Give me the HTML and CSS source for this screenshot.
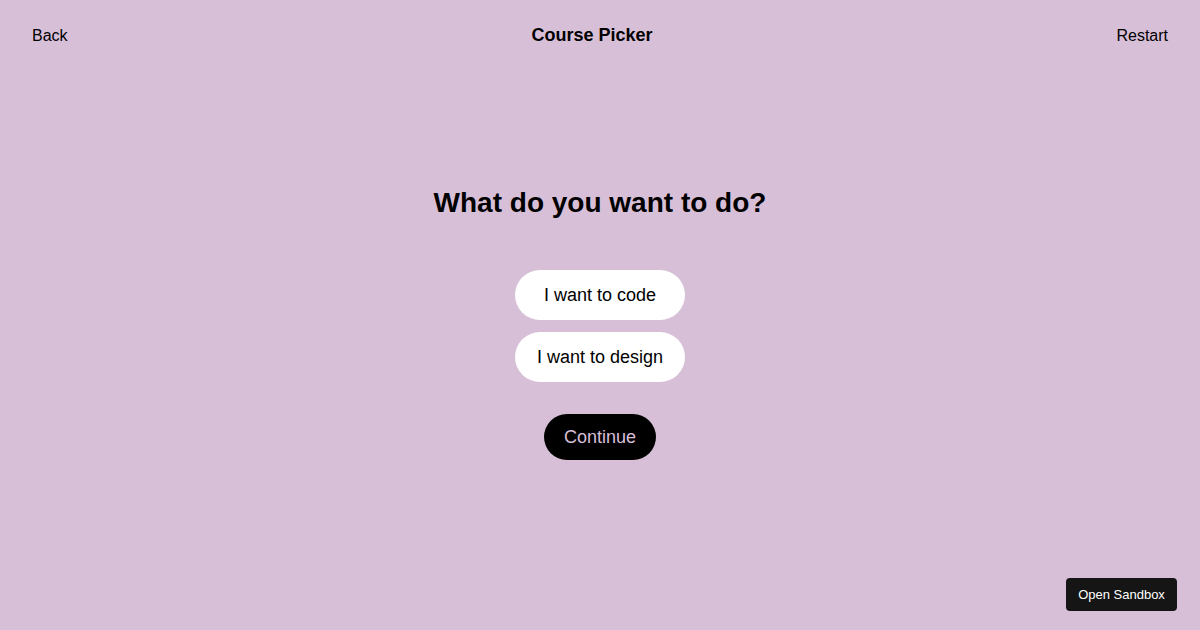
FILE: index.html
```html
<!DOCTYPE html>
<html lang="en">

<head>
    <meta charset="UTF-8">
    <meta name="viewport" content="width=device-width, initial-scale=1.0">
    <title>Course Picker</title>
    <link rel="stylesheet" href="styles.css">
</head>

<body>
    <header class="top-bar">
        <a class="nav-link" href="#">Back</a>
        <span class="app-title">Course Picker</span>
        <a class="nav-link" href="#">Restart</a>
    </header>

    <main class="question">
        <h1>What do you want to do?</h1>
        <div class="options">
            <button class="option">I want to code</button>
            <button class="option">I want to design</button>
        </div>
        <button class="continue">Continue</button>
    </main>

    <a class="sandbox-btn" href="#">Open Sandbox</a>
</body>

</html>
```

FILE: styles.css
```css
body {
    font-family: "Liberation Sans", Arial, sans-serif;
    background-color: #d8bfd8;
    color: #000;
    margin: 0;
    min-height: 100vh;
}

/* top navigation, items share one baseline */
.top-bar {
    display: flex;
    justify-content: space-between;
    align-items: baseline;
    height: 70px;
    box-sizing: border-box;
    padding: 25px 32px 0;
}

.nav-link {
    color: #000;
    text-decoration: none;
    font-size: 16px;
}

.app-title {
    font-size: 18px;
    font-weight: bold;
}

.question {
    display: flex;
    flex-direction: column;
    align-items: center;
    padding-top: 117px;
}

.question h1 {
    font-size: 28px;
    margin: 0 0 51px;
}

.options {
    display: flex;
    flex-direction: column;
    gap: 12px;
    margin-bottom: 32px;
}

.option {
    width: 170px;
    height: 50px;
    border: none;
    border-radius: 25px;
    background: #fff;
    color: #000;
    font-family: inherit;
    font-size: 18px;
    cursor: pointer;
}

.continue {
    height: 46px;
    padding: 0 20px;
    border: none;
    border-radius: 23px;
    background: #000;
    color: #d8bfd8;
    font-family: inherit;
    font-size: 18px;
    cursor: pointer;
}

.sandbox-btn {
    position: fixed;
    right: 23px;
    bottom: 19px;
    width: 111px;
    height: 33px;
    display: flex;
    align-items: center;
    justify-content: center;
    box-sizing: border-box;
    background: #151515;
    color: #fff;
    border-radius: 4px;
    font-size: 13px;
    text-decoration: none;
}
```
